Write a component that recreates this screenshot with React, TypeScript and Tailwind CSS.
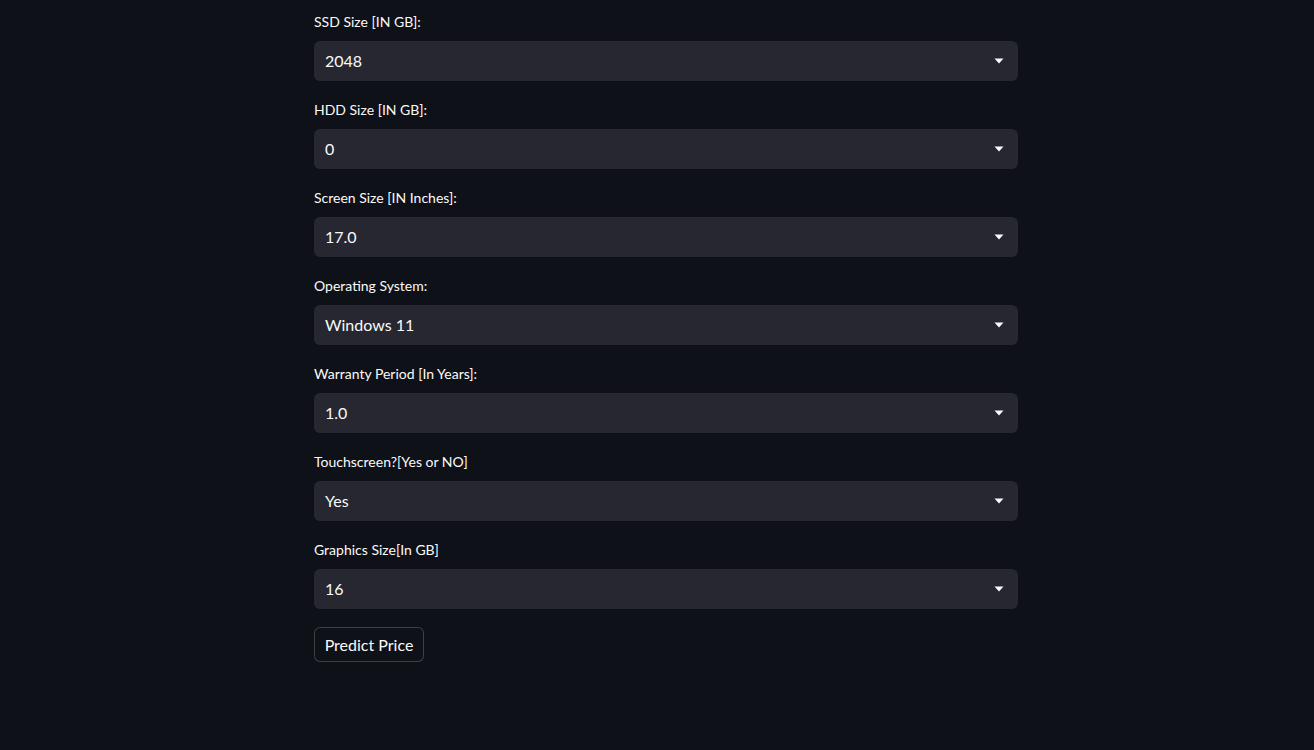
const fields: { label: string; value: string }[] = [
  { label: "SSD Size [IN GB]:", value: "2048" },
  { label: "HDD Size [IN GB]:", value: "0" },
  { label: "Screen Size [IN Inches]:", value: "17.0" },
  { label: "Operating System:", value: "Windows 11" },
  { label: "Warranty Period [In Years]:", value: "1.0" },
  { label: "Touchscreen?[Yes or NO]", value: "Yes" },
  { label: "Graphics Size[In GB]", value: "16" },
];

function Caret() {
  return (
    <svg width="10" height="6" viewBox="0 0 10 6" className="shrink-0">
      <path d="M0.5 0.5 L9.5 0.5 L5 5.5 Z" fill="#fafafa" />
    </svg>
  );
}

function SelectField({ label, value }: { label: string; value: string }) {
  return (
    <div className="flex flex-col">
      <label className="flex h-6 items-center text-[14px] text-[#fafafa]">{label}</label>
      <div className="mt-2 flex h-10 items-center justify-between rounded-[6px] bg-[#262730] pl-[11px] pr-[14px]">
        <span className="text-[16px] text-[#fafafa]">{value}</span>
        <Caret />
      </div>
    </div>
  );
}

export default function App() {
  return (
    <main
      className="min-h-[750px] w-full bg-[#0e1117]"
      style={{ fontFamily: "Lato, 'Noto Sans', sans-serif" }}
    >
      <div className="mx-auto w-[722px] pl-[18px] pt-[9px]">
        <div className="flex flex-col gap-4">
          {fields.map((f) => (
            <SelectField key={f.label} label={f.label} value={f.value} />
          ))}
          <div className="pt-[2px]">
            <button className="h-[35px] w-[110px] rounded-[6px] border border-[rgba(250,250,250,0.2)] bg-[#0e1117] text-[16px] text-[#fafafa]">
              Predict Price
            </button>
          </div>
        </div>
      </div>
    </main>
  );
}
